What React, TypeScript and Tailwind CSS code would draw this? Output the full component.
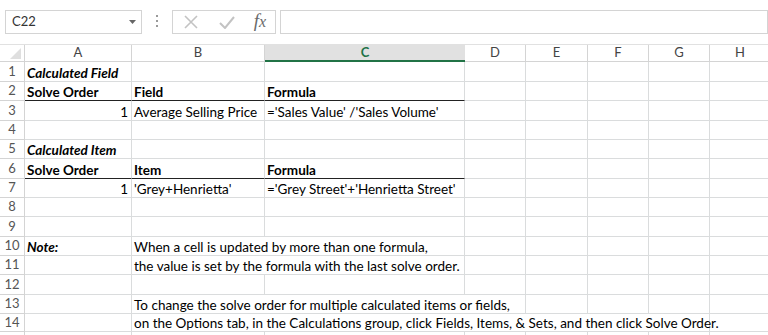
import React from "react";

type Cell = {
  text?: string;
  w: string;
  cls?: string;
  right?: boolean;
  under?: boolean;
};

const cols = {
  A: "w-[107px]",
  B: "w-[133px]",
  C: "w-[200px]",
  D: "w-[61px]",
  E: "w-[62px]",
  F: "w-[61px]",
  G: "w-[61px]",
  H: "w-[61px]",
};

const rest = (from: "C" | "D" | "E" | "H"): Cell[] => {
  const all: Cell[] = [
    { w: cols.C },
    { w: cols.D },
    { w: cols.E },
    { w: cols.F },
    { w: cols.G },
    { w: cols.H },
  ];
  const idx = { C: 0, D: 1, E: 2, H: 5 }[from];
  return all.slice(idx);
};

const rows: { n: string; h: string; cells: Cell[] }[] = [
  {
    n: "1",
    h: "h-[20px]",
    cells: [{ w: cols.A, text: "Calculated Field", cls: "font-bold italic" }, { w: cols.B }, ...rest("C")],
  },
  {
    n: "2",
    h: "h-[19px]",
    cells: [
      { w: cols.A, text: "Solve Order", cls: "font-bold", under: true },
      { w: cols.B, text: "Field", cls: "font-bold", under: true },
      { w: cols.C, text: "Formula", cls: "font-bold", under: true },
      ...rest("D"),
    ],
  },
  {
    n: "3",
    h: "h-[20px]",
    cells: [
      { w: cols.A, text: "1", right: true },
      { w: cols.B, text: "Average Selling Price" },
      { w: cols.C, text: "='Sales Value' /'Sales Volume'" },
      ...rest("D"),
    ],
  },
  { n: "4", h: "h-[19px]", cells: [{ w: cols.A }, { w: cols.B }, ...rest("C")] },
  {
    n: "5",
    h: "h-[19px]",
    cells: [{ w: cols.A, text: "Calculated Item", cls: "font-bold italic" }, { w: cols.B }, ...rest("C")],
  },
  {
    n: "6",
    h: "h-[20px]",
    cells: [
      { w: cols.A, text: "Solve Order", cls: "font-bold", under: true },
      { w: cols.B, text: "Item", cls: "font-bold", under: true },
      { w: cols.C, text: "Formula", cls: "font-bold", under: true },
      ...rest("D"),
    ],
  },
  {
    n: "7",
    h: "h-[19px]",
    cells: [
      { w: cols.A, text: "1", right: true },
      { w: cols.B, text: "'Grey+Henrietta'" },
      { w: cols.C, text: "='Grey Street'+'Henrietta Street'" },
      ...rest("D"),
    ],
  },
  { n: "8", h: "h-[19px]", cells: [{ w: cols.A }, { w: cols.B }, ...rest("C")] },
  { n: "9", h: "h-[20px]", cells: [{ w: cols.A }, { w: cols.B }, ...rest("C")] },
  {
    n: "10",
    h: "h-[19px]",
    cells: [
      { w: cols.A, text: "Note:", cls: "font-bold italic" },
      { w: "w-[333px]", text: "When a cell is updated by more than one formula," },
      ...rest("D"),
    ],
  },
  {
    n: "11",
    h: "h-[19px]",
    cells: [
      { w: cols.A },
      { w: "w-[333px]", text: "the value is set by the formula with the last solve order." },
      ...rest("D"),
    ],
  },
  { n: "12", h: "h-[20px]", cells: [{ w: cols.A }, { w: cols.B }, ...rest("C")] },
  {
    n: "13",
    h: "h-[19px]",
    cells: [
      { w: cols.A },
      { w: "w-[394px]", text: "To change the solve order for multiple calculated items or fields," },
      ...rest("E"),
    ],
  },
  {
    n: "14",
    h: "h-[18px]",
    cells: [
      { w: cols.A },
      {
        w: "w-[578px]",
        text: "on the Options tab, in the Calculations group, click Fields, Items, & Sets, and then click Solve Order.",
      },
      ...rest("H"),
    ],
  },
  // row 15 only shows its top few pixels, no number visible
  { n: "", h: "h-[19px]", cells: [{ w: cols.A }, { w: cols.B }, ...rest("C")] },
];

function FormulaBar() {
  return (
    <div className="flex h-[44px] items-start pt-[10px]">
      {/* name box */}
      <div className="ml-[5px] flex h-[24px] w-[137px] items-center justify-between border border-[#d4d4d4] bg-white pl-[6px] pr-[5px] text-[13px] text-[#333]">
        <span>C22</span>
        <svg width="7" height="4" viewBox="0 0 7 4">
          <path d="M0 0h7L3.5 4z" fill="#666" />
        </svg>
      </div>
      {/* grip dots */}
      <div className="flex w-[30px] flex-col items-center gap-[3px] pt-[5px]">
        <div className="h-[2px] w-[2px] bg-[#9a9a9a]" />
        <div className="h-[2px] w-[2px] bg-[#9a9a9a]" />
        <div className="h-[2px] w-[2px] bg-[#9a9a9a]" />
      </div>
      {/* cancel / enter / insert function */}
      <div className="flex h-[24px] w-[104px] items-center border border-[#d4d4d4] bg-white">
        <div className="flex w-[35px] justify-center">
          <svg width="14" height="14" viewBox="0 0 14 14">
            <path d="M1 1L13 13M13 1L1 13" stroke="#c3c3c3" strokeWidth="1.6" fill="none" />
          </svg>
        </div>
        <div className="flex w-[37px] justify-center">
          <svg width="16" height="13" viewBox="0 0 16 13">
            <path d="M1 7L6 12L15 1" stroke="#c3c3c3" strokeWidth="2" fill="none" />
          </svg>
        </div>
        <div className="flex w-[30px] justify-center font-['Liberation_Serif'] text-[19px] italic text-[#6a6a6a]">
          <span className="-mt-[2px]">
            f<span className="text-[16px]">x</span>
          </span>
        </div>
      </div>
      {/* formula input */}
      <div className="ml-[4px] h-[24px] flex-1 border border-[#d4d4d4] bg-white" />
    </div>
  );
}

function Headers() {
  const letters: [string, string][] = [
    ["A", cols.A],
    ["B", cols.B],
    ["C", cols.C],
    ["D", cols.D],
    ["E", cols.E],
    ["F", cols.F],
    ["G", cols.G],
    ["H", cols.H],
  ];
  return (
    <div className="flex h-[18px] border-t border-[#e1e1e1]">
      <div className="relative w-[25px] shrink-0 border-r border-b border-[#d4d4d4]">
        <svg className="absolute right-[3px] bottom-[2px]" width="11" height="11" viewBox="0 0 11 11">
          <path d="M11 0V11H0z" fill="#dfdfdf" />
        </svg>
      </div>
      {letters.map(([l, w]) =>
        l === "C" ? (
          <div
            key={l}
            className={`${w} flex shrink-0 items-center justify-center border-b-2 border-[#217346] bg-[#e1e1e1] text-[13px] font-bold text-[#217346]`}
          >
            {l}
          </div>
        ) : (
          <div
            key={l}
            className={`${w} flex shrink-0 items-center justify-center border-r border-b border-[#d4d4d4] text-[13px] text-[#444]`}
          >
            {l}
          </div>
        )
      )}
    </div>
  );
}

export default function App() {
  return (
    <div className="h-[335px] w-[768px] overflow-hidden bg-white font-['Lato'] text-[13.5px] text-black">
      <FormulaBar />
      <Headers />
      {rows.map((r, ri) => (
        <div key={ri} className={`flex ${r.h}`}>
          <div className="flex w-[25px] shrink-0 items-center justify-center border-r border-b border-[#d4d4d4] text-[13px] text-[#555]">
            {r.n}
          </div>
          {r.cells.map((c, i) => (
            <div
              key={i}
              className={`${c.w} flex shrink-0 items-end whitespace-nowrap border-r px-[2px] pb-[1px] leading-none ${
                c.under ? "border-b border-b-[#222] border-r-[#dadcdd]" : "border-b border-[#dadcdd]"
              } ${c.right ? "justify-end pr-[3px]" : ""} ${c.cls ?? ""}`}
            >
              {c.text}
            </div>
          ))}
        </div>
      ))}
    </div>
  );
}
